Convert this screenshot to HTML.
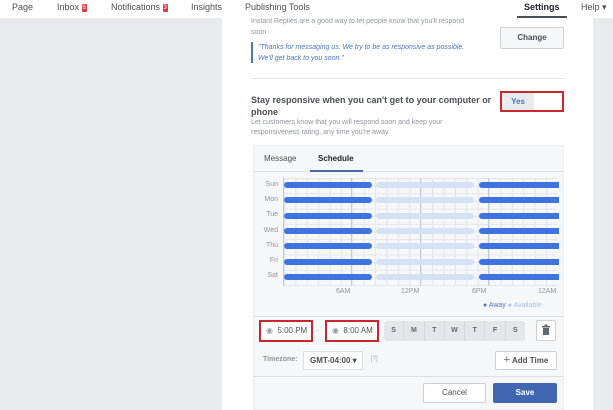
<!DOCTYPE html>
<html><head><meta charset="utf-8"><style>
*{margin:0;padding:0;box-sizing:border-box}
body{width:613px;height:410px;overflow:hidden;background:#e9ebee;font-family:"Liberation Sans",Arial,sans-serif;position:relative;color:#1d2129}
.a{position:absolute}
.nav{left:0;top:0;width:613px;height:18px;background:#fff;font-size:9px;color:#4b4f56;z-index:5}
.nav span{position:absolute;top:2px}
.badge{display:inline-block;background:#e0393e;color:#fff;font-size:6px;padding:0 1px;line-height:8px;border-radius:1px;vertical-align:1px}
.panel{left:222px;top:18px;width:371px;height:392px;background:#fff}
.card{left:253px;top:145px;width:311px;height:265px;background:#f6f7f9;border:1px solid #eceef1}
.day{font-size:7px;color:#90949c;width:26px;text-align:right;left:252px}
.bar{height:6px;border-radius:3px}
.red{border:2px solid #c8272d}
.btn{border:1px solid #ccd0d5;background:#f6f7f9;border-radius:2px;font-size:8px;font-weight:bold;color:#4b4f56;text-align:center}
</style></head><body>
<div class="a nav">
<span style="left:12px">Page</span>
<span style="left:57px">Inbox <span class="badge" style="position:static">6</span></span>
<span style="left:111px">Notifications <span class="badge" style="position:static">3</span></span>
<span style="left:191px">Insights</span>
<span style="left:245px">Publishing Tools</span>
<span style="left:524px;font-weight:bold;color:#1d2129">Settings</span>
<span style="left:581px">Help ▾</span>
<div class="a" style="left:517px;top:16px;width:50px;height:2px;background:#4b4f56"></div>
</div>
<div class="a panel"></div>
<div class="a" style="left:251px;top:16px;font-size:7px;color:#90949c;line-height:11px">Instant Replies are a good way to let people know that you'll respond<br>soon</div>
<div class="a btn" style="left:500px;top:27px;width:64px;height:22px;line-height:20px">Change</div>
<div class="a" style="left:251px;top:42px;width:2px;height:21px;background:#4a76c5"></div>
<div class="a" style="left:258px;top:42px;font-size:7px;font-style:italic;color:#4a76c5;line-height:11px">"Thanks for messaging us. We try to be as responsive as possible.<br>We'll get back to you soon."</div>
<div class="a" style="left:251px;top:78px;width:313px;height:1px;background:#e5e5e5"></div>
<div class="a" style="left:251px;top:94px;font-size:9px;font-weight:bold;color:#4b4f56;line-height:12px">Stay responsive when you can't get to your computer or<br>phone</div>
<div class="a" style="left:251px;top:118px;font-size:7px;color:#90949c;line-height:10px">Let customers know that you will respond soon and keep your<br>responsiveness rating, any time you're away.</div>
<div class="a red" style="left:500px;top:91px;width:64px;height:21px;background:#fff"><div style="width:32px;height:17px;background:#e9ebee;color:#4a76c5;font-size:8px;font-weight:bold;text-align:center;line-height:17px">Yes</div></div>
<div class="a card"></div>
<div class="a" style="left:254px;top:171px;width:309px;height:1px;background:#dddfe2"></div>
<div class="a" style="left:264px;top:154px;font-size:8px;color:#4b4f56">Message</div>
<div class="a" style="left:318px;top:154px;font-size:8px;font-weight:bold;color:#1d2129">Schedule</div>
<div class="a" style="left:310px;top:170px;width:53px;height:2px;background:#4b6aa8"></div>
<div class="a" style="left:283px;top:178px;width:274px;height:108px;border-left:1px solid #c5c9d0;background-image:linear-gradient(90deg,#e3e6ea 1px,transparent 1px),linear-gradient(#e3e6ea 1px,transparent 1px);background-size:11.4px 100%,100% 7.65px"></div>
<div class="a" style="left:351px;top:178px;width:1px;height:108px;background:#c5c9d0"></div>
<div class="a" style="left:420px;top:178px;width:1px;height:108px;background:#c5c9d0"></div>
<div class="a" style="left:488px;top:178px;width:1px;height:108px;background:#c5c9d0"></div>
<div class="a day" style="top:181px">Sun</div><div class="a day" style="top:196px">Mon</div><div class="a day" style="top:211px">Tue</div><div class="a day" style="top:227px">Wed</div><div class="a day" style="top:242px">Thu</div><div class="a day" style="top:257px">Fri</div><div class="a day" style="top:272px">Sat</div>
<div id="bars"></div>
<script>
var h='';for(var i=0;i<7;i++){var t=182+i*15.3;
h+='<div class="a bar" style="left:284px;top:'+t+'px;width:88px;background:#3f74e0"></div>';
h+='<div class="a bar" style="left:376px;top:'+t+'px;width:98px;background:#d5e1f6"></div>';
h+='<div class="a bar" style="left:479px;top:'+t+'px;width:80px;background:#3f74e0;border-radius:3px 0 0 3px"></div>';}
document.getElementById('bars').innerHTML=h;
</script>
<div class="a" style="left:336px;top:288px;font-size:7px;color:#90949c">6AM</div>
<div class="a" style="left:401px;top:288px;font-size:7px;color:#90949c">12PM</div>
<div class="a" style="left:472px;top:288px;font-size:7px;color:#90949c">6PM</div>
<div class="a" style="left:538px;top:288px;font-size:7px;color:#90949c">12AM</div>
<div class="a" style="left:483px;top:302px;font-size:7px;color:#4a76c5">● Away <span style="color:#a8c0ea">● Available</span></div>
<div class="a" style="left:254px;top:316px;width:309px;height:1px;background:#dddfe2"></div>
<div class="a red" style="left:259px;top:320px;width:54px;height:22px;background:#fff;font-size:8px;color:#4b4f56;line-height:18px;padding-left:5px"><span style="color:#999">◉</span>&nbsp; 5:00 PM</div>
<div class="a" style="left:316px;top:326px;font-size:8px;color:#bbb">-</div>
<div class="a red" style="left:325px;top:320px;width:54px;height:22px;background:#fff;font-size:8px;color:#4b4f56;line-height:18px;padding-left:5px"><span style="color:#999">◉</span>&nbsp; 8:00 AM</div>
<div class="a" style="left:384px;top:321px;width:141px;height:20px;background:#e4e6ea;border-radius:3px;display:flex;font-size:7px;font-weight:bold;color:#606770">
<span style="flex:1;text-align:center;line-height:20px;border-right:1px solid #d5d8dc">S</span><span style="flex:1;text-align:center;line-height:20px;border-right:1px solid #d5d8dc">M</span><span style="flex:1;text-align:center;line-height:20px;border-right:1px solid #d5d8dc">T</span><span style="flex:1;text-align:center;line-height:20px;border-right:1px solid #d5d8dc">W</span><span style="flex:1;text-align:center;line-height:20px;border-right:1px solid #d5d8dc">T</span><span style="flex:1;text-align:center;line-height:20px;border-right:1px solid #d5d8dc">F</span><span style="flex:1;text-align:center;line-height:20px">S</span></div>
<div class="a" style="left:536px;top:320px;width:20px;height:21px;background:#fff;border:1px solid #ccd0d5;border-radius:2px"><svg width="18" height="19" viewBox="0 0 18 19"><rect x="5" y="5" width="8" height="1.5" fill="#606770"/><rect x="7.5" y="3.5" width="3" height="1.5" fill="#606770"/><rect x="6" y="7" width="6" height="7" fill="#606770"/></svg></div>
<div class="a" style="left:263px;top:356px;font-size:7px;color:#90949c;font-weight:bold">Timezone:</div>
<div class="a" style="left:303px;top:351px;width:60px;height:19px;background:#fff;border:1px solid #dddfe2;font-size:8px;font-weight:bold;color:#4b4f56;line-height:17px;padding-left:6px">GMT-04:00 ▾</div>
<div class="a" style="left:371px;top:356px;font-size:6px;color:#aaa">[?]</div>
<div class="a" style="left:495px;top:351px;width:62px;height:19px;background:#fff;border:1px solid #ccd0d5;border-radius:2px;font-size:8px;font-weight:bold;color:#4b4f56;line-height:17px;text-align:center"><span style="font-size:11px;font-weight:normal;color:#606770">+</span> Add Time</div>
<div class="a" style="left:254px;top:376px;width:309px;height:1px;background:#dddfe2"></div>
<div class="a" style="left:423px;top:383px;width:63px;height:20px;background:#fff;border:1px solid #ccd0d5;border-radius:2px;font-size:8px;color:#4b4f56;line-height:18px;text-align:center">Cancel</div>
<div class="a" style="left:493px;top:383px;width:64px;height:20px;background:#4267b2;border-radius:2px;font-size:8px;font-weight:bold;color:#fff;line-height:20px;text-align:center">Save</div>
</body></html>
